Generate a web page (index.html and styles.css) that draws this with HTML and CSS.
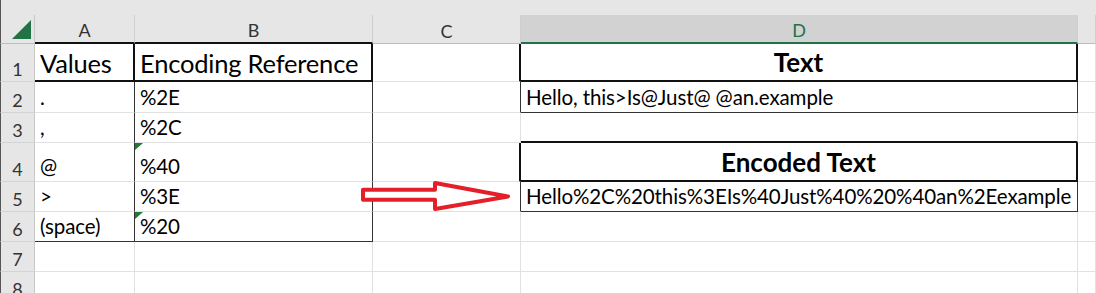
FILE: index.html
```html
<!DOCTYPE html>
<html lang="en">
<head>
  <meta charset="UTF-8">
  <title>URL Encoding</title>
  <link rel="stylesheet" href="styles.css">
</head>
<body>
  <div class="topbar"></div>
  <div class="sheet">
    <!-- column headings -->
    <div class="corner"><span class="select-all"></span></div>
    <div class="col-head head-edge">A</div>
    <div class="col-head head-edge">B</div>
    <div class="col-head">C</div>
    <div class="col-head active">D</div>
    <div class="col-head"></div>

    <!-- row 1 -->
    <div class="row-head">1</div>
    <div class="cell title rb2 bb2">Values</div>
    <div class="cell title rb2 bb2">Encoding Reference</div>
    <div class="cell rb2"></div>
    <div class="cell label rb2 bb2">Text</div>
    <div class="cell"></div>

    <!-- row 2 -->
    <div class="row-head">2</div>
    <div class="cell rb">.</div>
    <div class="cell rb">%2E</div>
    <div class="cell rb"></div>
    <div class="cell rb bb">Hello, this&gt;Is@Just@ @an.example</div>
    <div class="cell"></div>

    <!-- row 3 -->
    <div class="row-head">3</div>
    <div class="cell rb">,</div>
    <div class="cell rb">%2C</div>
    <div class="cell"></div>
    <div class="cell bb2"></div>
    <div class="cell"></div>

    <!-- row 4 -->
    <div class="row-head">4</div>
    <div class="cell rb">@</div>
    <div class="cell rb"><span class="flag"></span>%40</div>
    <div class="cell rb2"></div>
    <div class="cell label rb2 bb2">Encoded Text</div>
    <div class="cell"></div>

    <!-- row 5 -->
    <div class="row-head">5</div>
    <div class="cell rb">&gt;</div>
    <div class="cell rb">%3E</div>
    <div class="cell rb"></div>
    <div class="cell rb bb">Hello%2C%20this%3EIs%40Just%40%20%40an%2Eexample</div>
    <div class="cell"></div>

    <!-- row 6 -->
    <div class="row-head">6</div>
    <div class="cell rb bb">(space)</div>
    <div class="cell rb bb"><span class="flag"></span>%20</div>
    <div class="cell"></div>
    <div class="cell"></div>
    <div class="cell"></div>

    <!-- rows 7, 8 -->
    <div class="row-head">7</div>
    <div class="cell"></div>
    <div class="cell"></div>
    <div class="cell"></div>
    <div class="cell"></div>
    <div class="cell"></div>

    <div class="row-head">8</div>
    <div class="cell"></div>
    <div class="cell"></div>
    <div class="cell"></div>
    <div class="cell"></div>
    <div class="cell"></div>

    <!-- arrow from the table to the result -->
    <svg class="arrow" width="155" height="35" viewBox="0 0 155 35">
      <polygon points="4,10.7 76,10.7 76,4 149,17.5 76,30 76,20.7 4,20.7"
               fill="#fff" stroke="#e3202a" stroke-width="4" stroke-linejoin="round"/>
    </svg>
  </div>
</body>
</html>
```

FILE: styles.css
```css
body {
  margin: 0;
  background: #fff;
  font-family: Lato, "Liberation Sans", sans-serif;
  color: #000;
  overflow: hidden;
}

.topbar {
  height: 15px;
  background: #e6e6e6;
  border-left: 1px solid #555;
}

.sheet {
  position: relative;
  display: grid;
  grid-template-columns: 35px 100px 238px 148px 557px 1fr;
  grid-template-rows: 29px 38px 31px 30px 39px 30px 30px 30px 30px;
}

/* headings */
.corner {
  display: flex;
  justify-content: flex-end;
  align-items: flex-end;
  padding: 0 3px 4px 0;
  background: #e6e6e6;
  border-left: 1px solid #555;
  border-right: 1px solid #c8c8c8;
  border-bottom: 1px solid #bdbdbd;
  box-sizing: border-box;
}

.select-all {
  width: 19px;
  height: 19px;
  background: #217346;
  clip-path: polygon(100% 0, 100% 100%, 0 100%);
}

.col-head {
  display: flex;
  justify-content: center;
  align-items: center;
  padding-top: 3px;
  background: #e6e6e6;
  border-right: 1px solid #cfcfcf;
  border-bottom: 1px solid #bdbdbd;
  box-sizing: border-box;
  font-size: 18px;
  color: #333;
}

.col-head.head-edge {
  border-bottom: 2px solid #111;
}

.col-head.active {
  background: #d2d2d2;
  border-bottom: 2px solid #217346;
  color: #217346;
}

.row-head {
  display: flex;
  justify-content: center;
  align-items: flex-end;
  padding-bottom: 3px;
  background: #e6e6e6;
  border-left: 1px solid #555;
  border-right: 1px solid #c8c8c8;
  border-bottom: 1px solid #d4d4d4;
  box-sizing: border-box;
  font-size: 18px;
  line-height: 1;
  color: #333;
}

/* cells */
.cell {
  position: relative;
  display: flex;
  align-items: flex-end;
  padding: 0 0 3px 5px;
  border-right: 1px solid #e1e1e1;
  border-bottom: 1px solid #e1e1e1;
  box-sizing: border-box;
  font-size: 20.5px;
  letter-spacing: -0.1px;
  line-height: 1.1;
  white-space: nowrap;
}

.cell.title {
  font-size: 25.5px;
  letter-spacing: -0.2px;
}

.cell.label {
  justify-content: center;
  padding-left: 0;
  font-weight: bold;
  font-size: 26px;
  letter-spacing: 0;
}

.rb { border-right: 1px solid #333; }
.rb2 { border-right: 2px solid #111; }
.bb { border-bottom: 1px solid #333; }
.bb2 { border-bottom: 2px solid #111; }

/* green "number stored as text" mark */
.flag {
  position: absolute;
  top: 0;
  left: 0;
  width: 8px;
  height: 7px;
  background: #1e7b34;
  clip-path: polygon(0 0, 100% 0, 0 100%);
}

.arrow {
  position: absolute;
  left: 359px;
  top: 164px;
}
```
